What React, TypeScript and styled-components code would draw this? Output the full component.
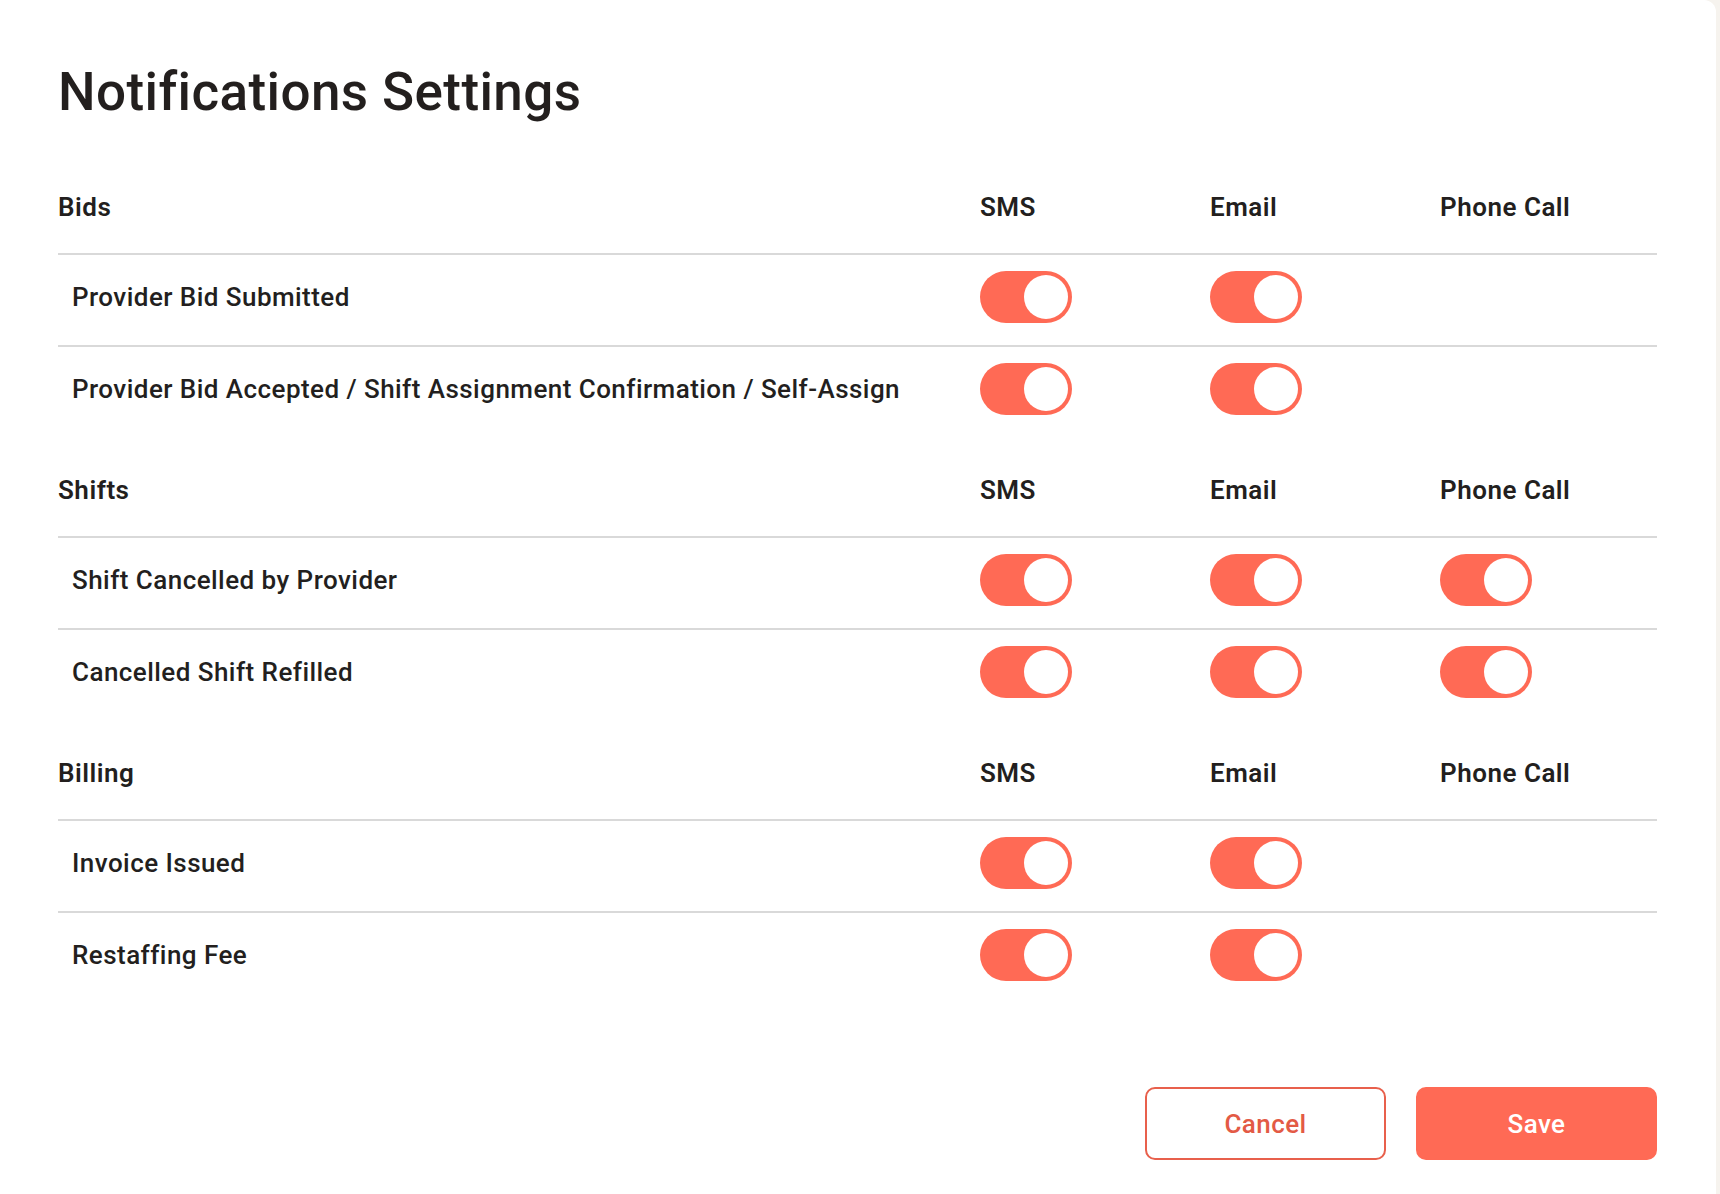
import styled, { createGlobalStyle } from "styled-components";
import { Fragment } from "react";

const GlobalStyle = createGlobalStyle`
  html, body {
    margin: 0;
    padding: 0;
    background: #f6f3ee;
  }
  body {
    font-family: Roboto, "Liberation Sans", sans-serif;
    color: #231f1e;
  }
`;

type Channel = "sms" | "email" | "phone";

type Setting = {
  label: string;
  channels: Channel[];
};

type Section = {
  title: string;
  items: Setting[];
};

const sections: Section[] = [
  {
    title: "Bids",
    items: [
      { label: "Provider Bid Submitted", channels: ["sms", "email"] },
      {
        label:
          "Provider Bid Accepted / Shift Assignment Confirmation / Self-Assign",
        channels: ["sms", "email"],
      },
    ],
  },
  {
    title: "Shifts",
    items: [
      { label: "Shift Cancelled by Provider", channels: ["sms", "email", "phone"] },
      { label: "Cancelled Shift Refilled", channels: ["sms", "email", "phone"] },
    ],
  },
  {
    title: "Billing",
    items: [
      { label: "Invoice Issued", channels: ["sms", "email"] },
      { label: "Restaffing Fee", channels: ["sms", "email"] },
    ],
  },
];

const columns: { key: Channel; name: string }[] = [
  { key: "sms", name: "SMS" },
  { key: "email", name: "Email" },
  { key: "phone", name: "Phone Call" },
];

const Card = styled.div`
  box-sizing: border-box;
  width: 1716px;
  min-height: 100vh;
  background: #ffffff;
  border-radius: 0 12px 0 0;
  padding: 58px 59px 40px 58px;
`;

const Title = styled.h1`
  margin: 0 0 30px;
  font-size: 53px;
  line-height: 68px;
  font-weight: 500;
  letter-spacing: 0.4px;
`;

const Grid = styled.div`
  display: grid;
  grid-template-columns: 1fr 230px 230px 217px;
`;

const HeadCell = styled.div`
  box-sizing: border-box;
  height: 99px;
  padding-top: 4px;
  display: flex;
  align-items: center;
  border-bottom: 2px solid #d9d9d9;
  font-size: 26px;
  font-weight: 600;
  letter-spacing: 0.5px;
`;

const Cell = styled.div<{ $divider: boolean }>`
  box-sizing: border-box;
  height: 92px;
  padding-bottom: 6px;
  display: flex;
  align-items: center;
  border-bottom: ${(p) => (p.$divider ? "2px solid #d9d9d9" : "2px solid transparent")};
`;

const Label = styled(Cell)`
  padding-left: 14px;
  font-size: 26px;
  font-weight: 500;
  letter-spacing: 0.45px;
`;

const Toggle = styled.button<{ $on: boolean }>`
  position: relative;
  width: 92px;
  height: 52px;
  padding: 0;
  border: none;
  border-radius: 26px;
  background: ${(p) => (p.$on ? "#ff6a55" : "#d9d9d9")};
  cursor: pointer;

  &::after {
    content: "";
    position: absolute;
    top: 4px;
    left: ${(p) => (p.$on ? "44px" : "4px")};
    width: 44px;
    height: 44px;
    border-radius: 50%;
    background: #ffffff;
  }
`;

const Footer = styled.div`
  display: flex;
  justify-content: flex-end;
  gap: 30px;
  margin-top: 82px;
`;

const Button = styled.button<{ $primary?: boolean }>`
  box-sizing: border-box;
  width: 241px;
  height: 73px;
  border-radius: 10px;
  border: 2px solid ${(p) => (p.$primary ? "#ff6a55" : "#e8604c")};
  background: ${(p) => (p.$primary ? "#ff6a55" : "#ffffff")};
  color: ${(p) => (p.$primary ? "#ffffff" : "#e35a45")};
  font-family: Roboto, "Liberation Sans", sans-serif;
  font-size: 26px;
  font-weight: 500;
  letter-spacing: 0.4px;
  cursor: pointer;
`;

export default function App() {
  return (
    <>
      <GlobalStyle />
      <Card>
        <Title>Notifications Settings</Title>
        <Grid>
          {sections.map((section) => (
            <Fragment key={section.title}>
              <HeadCell>{section.title}</HeadCell>
              {columns.map((c) => (
                <HeadCell key={c.key}>{c.name}</HeadCell>
              ))}
              {section.items.map((item, i) => {
                const divider = i < section.items.length - 1;
                return (
                  <Fragment key={item.label}>
                    <Label $divider={divider}>{item.label}</Label>
                    {columns.map((c) => (
                      <Cell key={c.key} $divider={divider}>
                        {item.channels.includes(c.key) && <Toggle $on />}
                      </Cell>
                    ))}
                  </Fragment>
                );
              })}
            </Fragment>
          ))}
        </Grid>
        <Footer>
          <Button>Cancel</Button>
          <Button $primary>Save</Button>
        </Footer>
      </Card>
    </>
  );
}
